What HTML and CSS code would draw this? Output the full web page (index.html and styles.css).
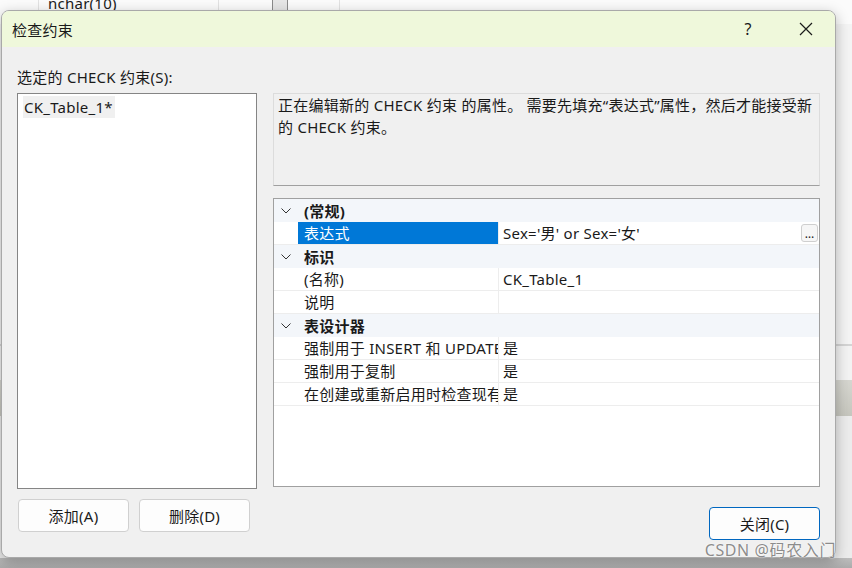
FILE: index.html
```html
<!DOCTYPE html>
<html lang="zh-CN">
<head>
    <meta charset="UTF-8">
    <title>检查约束</title>
    <link rel="stylesheet" href="styles.css">
</head>
<body>
    <!-- the designer window behind the dialog -->
    <div class="desk">
        <div class="desk-row">
            <div class="cell c-gap"></div>
            <div class="cell c-type">nchar(10)</div>
            <div class="cell c-null"><span class="chk"></span></div>
            <div class="cell c-rest"></div>
        </div>
        <div class="desk-mid"></div>
        <div class="desk-line"></div>
        <div class="desk-band"></div>
        <div class="desk-low"></div>
        <div class="desk-foot"></div>
    </div>

    <div class="dialog">
        <div class="titlebar">
            <span class="title">检查约束</span>
            <span class="tb-btn help">?</span>
            <span class="tb-btn close">
                <svg width="14" height="14" viewBox="0 0 14 14">
                    <path d="M1 1 L13 13 M13 1 L1 13" stroke="#1b1b1b" stroke-width="1.2" fill="none"/>
                </svg>
            </span>
        </div>

        <div class="dlg-body">
            <div class="col-left">
                <div class="label">选定的 CHECK 约束(S):</div>
                <div class="listbox">
                    <div class="list-item">CK_Table_1*</div>
                </div>
                <div class="btn-row">
                    <button class="btn">添加(A)</button>
                    <button class="btn">删除(D)</button>
                </div>
            </div>

            <div class="col-right">
                <div class="desc">正在编辑新的 CHECK 约束 的属性。 需要先填充“表达式”属性，然后才能接受新<br>的 CHECK 约束。</div>

                <div class="propgrid">
                    <div class="pg-cat">
                        <span class="chev"><svg width="10" height="6" viewBox="0 0 10 6"><path d="M0.5 0.5 L5 5 L9.5 0.5" stroke="#333" fill="none"/></svg></span>
                        <span class="cat-name">(常规)</span>
                    </div>
                    <div class="pg-row selected">
                        <span class="pg-gut"></span>
                        <span class="pg-name">表达式</span>
                        <span class="pg-val">Sex='男' or Sex='女'<span class="ellip">…</span></span>
                    </div>
                    <div class="pg-cat">
                        <span class="chev"><svg width="10" height="6" viewBox="0 0 10 6"><path d="M0.5 0.5 L5 5 L9.5 0.5" stroke="#333" fill="none"/></svg></span>
                        <span class="cat-name">标识</span>
                    </div>
                    <div class="pg-row">
                        <span class="pg-gut"></span>
                        <span class="pg-name">(名称)</span>
                        <span class="pg-val">CK_Table_1</span>
                    </div>
                    <div class="pg-row">
                        <span class="pg-gut"></span>
                        <span class="pg-name">说明</span>
                        <span class="pg-val"></span>
                    </div>
                    <div class="pg-cat">
                        <span class="chev"><svg width="10" height="6" viewBox="0 0 10 6"><path d="M0.5 0.5 L5 5 L9.5 0.5" stroke="#333" fill="none"/></svg></span>
                        <span class="cat-name">表设计器</span>
                    </div>
                    <div class="pg-row">
                        <span class="pg-gut"></span>
                        <span class="pg-name">强制用于 INSERT 和 UPDATE</span>
                        <span class="pg-val">是</span>
                    </div>
                    <div class="pg-row">
                        <span class="pg-gut"></span>
                        <span class="pg-name">强制用于复制</span>
                        <span class="pg-val">是</span>
                    </div>
                    <div class="pg-row">
                        <span class="pg-gut"></span>
                        <span class="pg-name">在创建或重新启用时检查现有数据</span>
                        <span class="pg-val">是</span>
                    </div>
                </div>

                <button class="btn btn-close">关闭(C)</button>
            </div>
        </div>
    </div>

    <div class="watermark">CSDN @码农入门</div>
</body>
</html>
```

FILE: styles.css
```css
body {
    margin: 0;
    width: 852px;
    height: 568px;
    overflow: hidden;
    font-family: "Noto Sans", "Noto Sans CJK SC", sans-serif;
    font-size: 15px;
    letter-spacing: 0.25px;
    color: #1a1a1a;
    position: relative;
}

/* background window */
.desk {
    display: flex;
    flex-direction: column;
    height: 568px;
    background: #f3f3f3;
}
.desk-row {
    display: flex;
    height: 24px;
    background: #fbfbfb;
}
.cell {
    border-right: 1px solid #e2e2e2;
}
.c-gap { width: 38px; }
.c-type {
    width: 170px;
    padding-left: 9px;
    line-height: 12px;
    margin-top: -3px;
}
.c-null {
    width: 121px;
    padding-left: 53px;
    box-sizing: border-box;
}
.chk {
    display: block;
    width: 14px;
    height: 12px;
    border: 1px solid #8a8a8a;
    border-top: none;
    background: #e6e6e6;
}
.c-rest { flex: 1; border: none; }
.desk-mid { height: 320px; background: #f4f4f4; }
.desk-line { height: 2px; background: #d4d4d4; }
.desk-band { height: 36px; margin-top: 34px; background: linear-gradient(#d6d6d0, #c6c6be); }
.desk-low { flex: 1; background: #ececec; }
.desk-foot { height: 10px; background: linear-gradient(#bdbdbd, #ababab); }

/* dialog */
.dialog {
    position: absolute;
    left: 1px;
    top: 10px;
    width: 835px;
    height: 548px;
    box-sizing: border-box;
    border: 1px solid #a9a9a9;
    border-radius: 8px;
    background: #f0f0f0;
    overflow: hidden;
    box-shadow: 0 4px 14px rgba(0, 0, 0, 0.28);
    display: flex;
    flex-direction: column;
}
.titlebar {
    height: 36px;
    flex-shrink: 0;
    background: #eff8db;
    display: flex;
    align-items: center;
    padding-left: 10px;
}
.title { flex: 1; padding-top: 1px; }
.tb-btn {
    width: 58px;
    height: 36px;
    display: flex;
    align-items: center;
    justify-content: center;
}
.help { font-size: 16px; }

.dlg-body {
    display: flex;
    gap: 16px;
    padding: 20px 15px 0 15px;
}
.col-left {
    width: 240px;
    display: flex;
    flex-direction: column;
}
.label {
    line-height: 20px;
    height: 20px;
    margin-bottom: 6px;
}
.listbox {
    height: 396px;
    box-sizing: border-box;
    border: 1px solid #858585;
    background: #fff;
    padding: 2px 5px;
}
.list-item {
    display: inline-block;
    background: #f0f0f0;
    line-height: 22px;
    padding: 0 2px 0 1px;
}
.btn-row {
    display: flex;
    gap: 10px;
    margin-top: 10px;
    padding-left: 1px;
}
.btn {
    width: 111px;
    height: 33px;
    border: 1px solid #d0d0d0;
    border-radius: 4px;
    background: #fdfdfd;
    font: inherit;
    letter-spacing: inherit;
    color: #1a1a1a;
    padding: 0;
}

.col-right {
    width: 547px;
    padding-top: 26px;
    display: flex;
    flex-direction: column;
}
.desc {
    height: 93px;
    box-sizing: border-box;
    border: 1px solid #dcdcdc;
    border-bottom-color: #a0a0a0;
    padding: 0 4px;
    line-height: 22px;
    white-space: nowrap;
    overflow: hidden;
}
.propgrid {
    margin-top: 12px;
    height: 289px;
    box-sizing: border-box;
    border: 1px solid #a0a0a0;
    background: #fff;
}
.pg-cat {
    display: flex;
    align-items: center;
    height: 23px;
    background: #f3f6fa;
}
.chev {
    width: 24px;
    display: flex;
    justify-content: center;
    padding-top: 1px;
}
.cat-name {
    font-weight: bold;
    padding-left: 6px;
}
.pg-row {
    display: flex;
    height: 23px;
    line-height: 22px;
    box-sizing: border-box;
    border-bottom: 1px solid #ededed;
}
.pg-gut { width: 24px; }
.pg-name {
    width: 200px;
    padding-left: 6px;
    box-sizing: border-box;
    white-space: nowrap;
    overflow: hidden;
}
.pg-val {
    flex: 1;
    border-left: 1px solid #ededed;
    padding-left: 4px;
    display: flex;
    align-items: center;
}
.selected .pg-name {
    background: #0078d7;
    color: #fff;
}
.ellip {
    margin-left: auto;
    margin-right: 1px;
    width: 17px;
    height: 18px;
    box-sizing: border-box;
    border: 1px solid #cfcfcf;
    border-radius: 3px;
    background: #f6f6f6;
    font-size: 12px;
    letter-spacing: 0;
    line-height: 18px;
    text-align: center;
}
.btn-close {
    align-self: flex-end;
    margin-top: 20px;
    border-color: #0067c0;
}

.watermark {
    position: absolute;
    right: 16px;
    top: 540px;
    font-size: 16px;
    line-height: 20px;
    color: rgba(120, 120, 120, 0.85);
    text-shadow: 0 0 2px #fff;
    letter-spacing: 0.6px;
}
```
